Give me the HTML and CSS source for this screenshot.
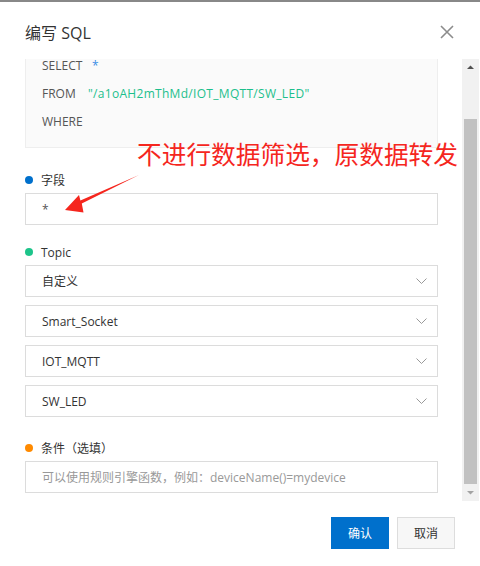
FILE: index.html
```html
<!DOCTYPE html>
<html lang="zh-CN">
<head>
    <meta charset="UTF-8">
    <meta name="viewport" content="width=device-width, initial-scale=1.0">
    <title>编写 SQL</title>
    <link rel="stylesheet" href="styles.css">
</head>
<body>
    <div class="page">
        <div class="dialog">
            <div class="dialog-head">
                <h2>编写 SQL</h2>
                <svg class="close" width="14" height="14" viewBox="0 0 14 14">
                    <path d="M1 1 L13 13 M13 1 L1 13" stroke="#8c8c8c" stroke-width="1.6" fill="none"/>
                </svg>
            </div>

            <div class="dialog-body">
                <div class="form">
                    <div class="sql">
                        <div class="sql-line"><span class="kw">SELECT</span><span class="star">*</span></div>
                        <div class="sql-line"><span class="kw">FROM</span><span class="topic">"/a1oAH2mThMd/IOT_MQTT/SW_LED"</span></div>
                        <div class="sql-line"><span class="kw">WHERE</span></div>
                    </div>

                    <div class="label label-field"><i class="dot blue"></i>字段</div>
                    <div class="input">*</div>

                    <div class="label label-topic"><i class="dot green"></i>Topic</div>
                    <div class="selects">
                        <div class="select">自定义<svg width="11" height="7" viewBox="0 0 11 7"><path d="M0.5 0.5 L5.5 5.5 L10.5 0.5" stroke="#999" fill="none"/></svg></div>
                        <div class="select">Smart_Socket<svg width="11" height="7" viewBox="0 0 11 7"><path d="M0.5 0.5 L5.5 5.5 L10.5 0.5" stroke="#999" fill="none"/></svg></div>
                        <div class="select">IOT_MQTT<svg width="11" height="7" viewBox="0 0 11 7"><path d="M0.5 0.5 L5.5 5.5 L10.5 0.5" stroke="#999" fill="none"/></svg></div>
                        <div class="select">SW_LED<svg width="11" height="7" viewBox="0 0 11 7"><path d="M0.5 0.5 L5.5 5.5 L10.5 0.5" stroke="#999" fill="none"/></svg></div>
                    </div>

                    <div class="label label-cond"><i class="dot orange"></i>条件（选填）</div>
                    <div class="input placeholder">可以使用规则引擎函数，例如：deviceName()=mydevice</div>
                </div>

                <div class="scrollbar">
                    <svg class="arrow" width="17" height="17" viewBox="0 0 17 17"><path d="M5 10 L12 10 L8.5 6.5 Z" fill="#505050"/></svg>
                    <div class="track"><div class="thumb"></div></div>
                    <svg class="arrow" width="17" height="17" viewBox="0 0 17 17"><path d="M5 7 L12 7 L8.5 10.5 Z" fill="#a3a3a3"/></svg>
                </div>
            </div>

            <div class="dialog-foot">
                <button type="button" class="btn primary">确认</button>
                <button type="button" class="btn">取消</button>
            </div>
        </div>

        <!-- 标注 -->
        <div class="note">不进行数据筛选，原数据转发</div>
        <svg class="note-arrow" width="480" height="566" viewBox="0 0 480 566">
            <polygon points="65,210 79,195 80.4,200.4 139,175 81.8,203.6 83.5,212.5" fill="#f5261e"/>
        </svg>
    </div>
</body>
</html>
```

FILE: styles.css
```css
*{
    margin: 0px;
    padding: 0px;
    box-sizing: border-box;
}

body{
    font-family: "Open Sans", "Noto Sans CJK SC", sans-serif;
    font-size: 12px;
    color: #333;
    background-color: #fff;
}

.page{
    position: relative;
    width: 480px;
    height: 566px;
    overflow: hidden;
}

.dialog{
    display: flex;
    flex-direction: column;
    height: 566px;
    border-top: 2px solid #888;
}

.dialog-head{
    display: flex;
    justify-content: space-between;
    align-items: center;
    height: 57px;
    padding: 3px 26px 0px 25px;
}

.dialog-head h2{
    font-size: 16px;
    font-weight: normal;
    color: #333;
}

.close{
    margin-top: -1px;
}

/* 内容区（已滚到底部） */
.dialog-body{
    display: flex;
    height: 442px;
}

.form{
    flex: 1;
    padding: 0px 24px 0px 25px;
}

.sql{
    display: flex;
    flex-direction: column;
    gap: 14px;
    padding: 0px 16px 18px;
    background-color: #fafafa;
    border: 1px solid #eee;
    border-top: none;
    line-height: 14px;
    color: #555;
}

.sql .kw{
    display: inline-block;
    width: 46px;
}

.sql .star{
    color: #3a8ee6;
    margin-left: 4px;
}

.sql .topic{
    color: #1dbf8c;
    letter-spacing: 0.3px;
}

.label{
    display: flex;
    align-items: center;
    height: 20px;
    margin-bottom: 3px;
    color: #333;
}

.label-field{
    margin-top: 22px;
}

.label-topic{
    margin-top: 17px;
}

.label-cond{
    margin-top: 21px;
}

.dot{
    display: inline-block;
    width: 8px;
    height: 8px;
    border-radius: 50%;
    margin-right: 8px;
}

.blue{ background-color: #0070cc; }
.green{ background-color: #1dc48a; }
.orange{ background-color: #ff8a00; }

.input, .select{
    display: flex;
    align-items: center;
    height: 32px;
    padding: 0px 10px 0px 16px;
    border: 1px solid #dcdcdc;
    color: #555;
}

.placeholder{
    color: #999;
}

.selects{
    display: flex;
    flex-direction: column;
    gap: 8px;
}

.select{
    justify-content: space-between;
    color: #333;
}

/* 滚动条 */
.scrollbar{
    display: flex;
    flex-direction: column;
    width: 17px;
    margin-right: 1px;
    background-color: #f1f1f1;
}

.track{
    flex: 1;
    display: flex;
    flex-direction: column;
    justify-content: flex-end;
    padding: 0px 2px;
}

.thumb{
    height: 365px;
    background-color: #c1c1c1;
}

.dialog-foot{
    display: flex;
    justify-content: flex-end;
    gap: 8px;
    padding: 16px 25px 0px;
}

.btn{
    width: 58px;
    height: 32px;
    font-family: inherit;
    font-size: 12px;
    color: #333;
    background-color: #f7f7f7;
    border: 1px solid #ddd;
}

.btn.primary{
    color: #fff;
    background-color: #0070cc;
    border-color: #0070cc;
}

.note{
    position: absolute;
    left: 137px;
    top: 141px;
    font-family: "Noto Sans CJK SC", sans-serif;
    font-size: 24.7px;
    line-height: 1;
    color: #f5261e;
    white-space: nowrap;
}

.note-arrow{
    position: absolute;
    left: 0px;
    top: 0px;
    pointer-events: none;
}
```
